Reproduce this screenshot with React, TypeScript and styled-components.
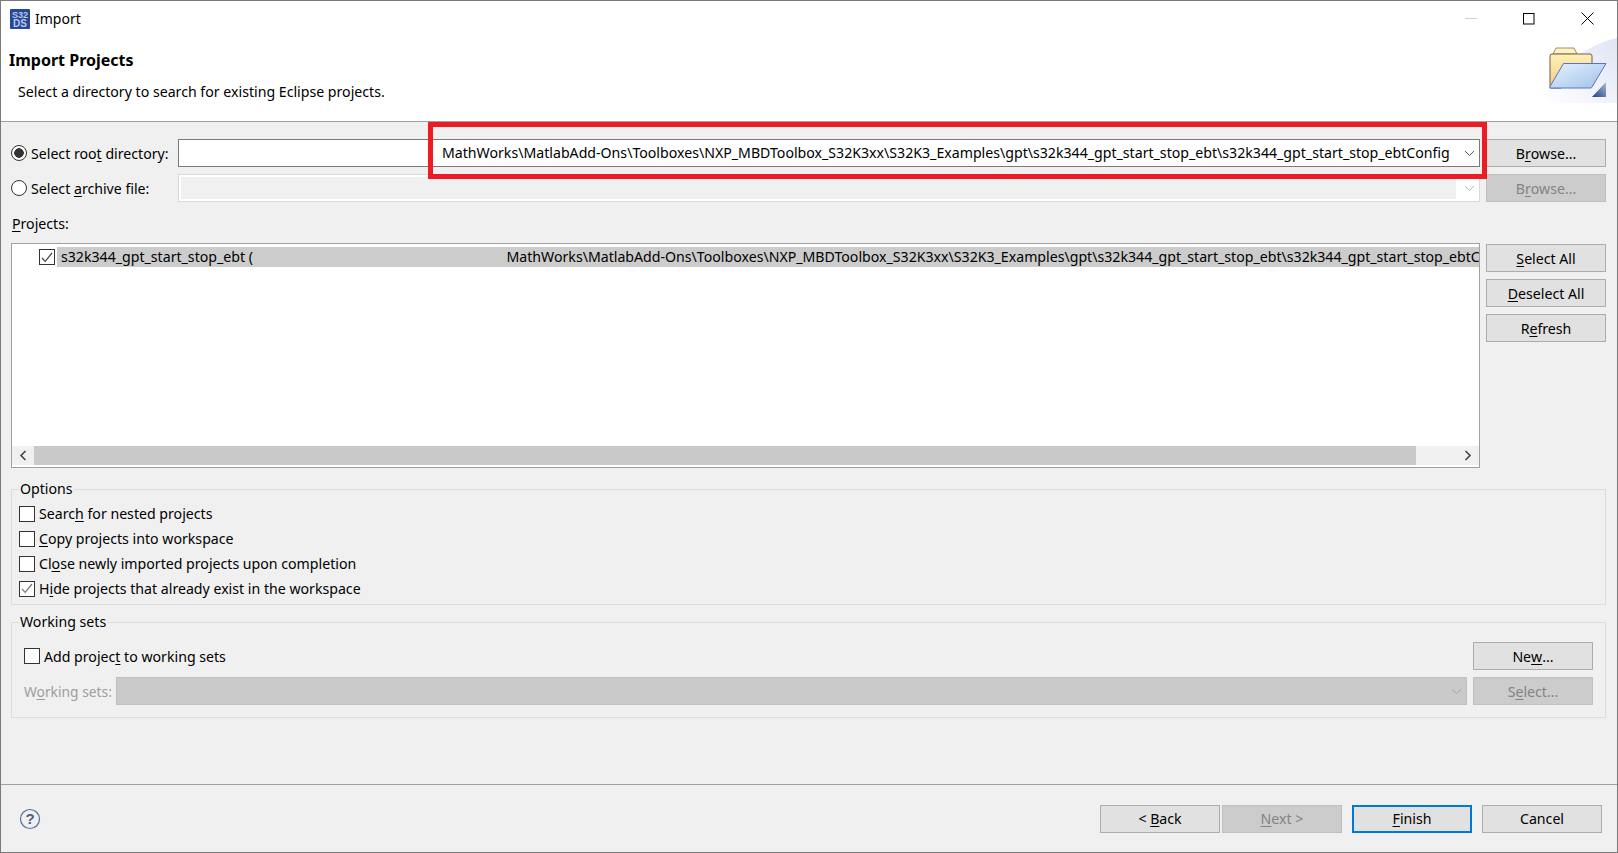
import React from "react";
import styled, { createGlobalStyle } from "styled-components";

const Global = createGlobalStyle`
  html, body { margin: 0; padding: 0; background: #f0f0f0; }
  body { font-family: "Noto Sans", "Open Sans", sans-serif; font-size: 14.15px; color: #000; }
  * { box-sizing: border-box; }
`;

const Window = styled.div`
  width: 1618px;
  height: 853px;
  border: 1px solid #7a7a7a;
  display: flex;
  flex-direction: column;
  background: #f0f0f0;
  overflow: hidden;
  position: relative;
`;
const TitleBar = styled.div`
  height: 37px;
  background: #fff;
  display: flex;
  align-items: center;
  padding: 0 23px 2px 9px;
  flex: none;
`;
const TitleText = styled.span`
  margin-left: 5px;
  font-size: 14px;
  flex: 1;
`;
const WinButtons = styled.div`
  display: flex;
  gap: 45px;
  align-items: center;
`;
const Header = styled.div`
  height: 84px;
  background: #fff;
  border-bottom: 1px solid #a0a0a0;
  flex: none;
  padding: 12px 0 0 8px;
  position: relative;
`;
const HeaderTitle = styled.div`
  font-weight: 700;
  font-size: 16px;
  line-height: 20px;
`;
const HeaderSub = styled.div`
  line-height: 20px;
  margin: 12px 0 0 9px;
`;
const Banner = styled.svg`
  position: absolute;
  right: 0;
  top: 0;
`;
const Body = styled.div`
  flex: 1;
  padding: 17px 11px 0 10px;
  display: flex;
  flex-direction: column;
  position: relative;
`;
const FormRow = styled.div<{ $mt?: number }>`
  display: flex;
  height: 28px;
  align-items: center;
  margin-top: ${(p) => p.$mt ?? 0}px;
`;
const Radio = styled.span<{ $on?: boolean }>`
  width: 16px;
  height: 16px;
  border-radius: 50%;
  border: 1px solid #333;
  background: ${(p) => (p.$on ? "radial-gradient(circle, #333 0 4.5px, #fff 5px)" : "#fff")};
  flex: none;
`;
const RadioLabel = styled.span`
  width: 147px;
  margin-left: 4px;
  white-space: nowrap;
`;
const Combo = styled.div<{ $disabled?: boolean }>`
  flex: 1;
  height: 28px;
  border: 1px solid ${(p) => (p.$disabled ? "#d9d9d9" : "#7a7a7a")};
  background: #fff;
  display: flex;
  align-items: center;
  justify-content: flex-end;
  padding: ${(p) => (p.$disabled ? "2px 0 2px 2px" : "0")};
  white-space: nowrap;
`;
const ComboDisabledFill = styled.div`
  flex: 1;
  height: 100%;
  background: #f0f0f0;
`;
const ComboValue = styled.span`
  flex: 1;
  text-align: left;
  margin-left: 263px;
  padding-bottom: 1px;
`;
const ChevronBox = styled.span`
  width: 23px;
  padding-left: 4px;
  display: flex;
  justify-content: center;
  flex: none;
`;
const Btn = styled.div<{ $disabled?: boolean; $default?: boolean }>`
  width: 120px;
  height: 28px;
  flex: none;
  display: flex;
  align-items: center;
  justify-content: center;
  white-space: pre;
  background: ${(p) => (p.$disabled ? "#cccccc" : "#e1e1e1")};
  color: ${(p) => (p.$disabled ? "#838383" : "#000")};
  border: ${(p) => (p.$default ? "2px solid #0078d7" : `1px solid ${p.$disabled ? "#bfbfbf" : "#adadad"}`)};
`;
const RowBtn = styled(Btn)`
  margin-left: 6px;
`;
const ProjectsLabel = styled.div`
  margin-top: 12px;
  line-height: 20px;
  padding-left: 1px;
`;
const TreeRow = styled.div`
  display: flex;
  margin-top: 9px;
  height: 225px;
  gap: 6px;
`;
const Tree = styled.div`
  flex: 1;
  min-width: 0;
  border: 1px solid #a0a0a0;
  background: #fff;
  display: flex;
  flex-direction: column;
  padding-top: 3px;
`;
const TreeItem = styled.div`
  display: flex;
  align-items: center;
  height: 20px;
  padding-left: 27px;
  flex: none;
`;
const Selected = styled.div`
  flex: 1;
  min-width: 0;
  height: 20px;
  background: #cccccc;
  margin-left: 2px;
  padding-left: 4px;
  line-height: 20px;
  white-space: nowrap;
  overflow: hidden;
  display: flex;
`;
const PathStart = styled.span`
  margin-left: 253.5px;
`;
const TreeSpacer = styled.div`
  flex: 1;
`;
const HScroll = styled.div`
  height: 19px;
  display: flex;
  align-items: center;
  background: #f0f0f0;
  margin-bottom: 2px;
`;
const ScrollArrow = styled.span`
  width: 22px;
  display: flex;
  justify-content: center;
  flex: none;
`;
const ScrollThumb = styled.div`
  width: 1382px;
  height: 100%;
  background: #c9c9c9;
  flex: none;
`;
const ScrollRest = styled.div`
  flex: 1;
`;
const SideButtons = styled.div`
  width: 120px;
  flex: none;
  display: flex;
  flex-direction: column;
  gap: 7px;
  padding-top: 1px;
`;
const Group = styled.fieldset<{ $mt: number; $h: number }>`
  margin: ${(p) => p.$mt}px 0 0 0;
  height: ${(p) => p.$h}px;
  border: 1px solid #dcdcdc;
  padding: 0;
  position: relative;
  display: block;
`;
const Legend = styled.legend`
  margin-left: 7px;
  padding: 0 1px;
  line-height: 18px;
`;
const CheckRow = styled.div<{ $ml?: number }>`
  display: flex;
  align-items: center;
  height: 25px;
  margin-left: ${(p) => p.$ml ?? 7}px;
`;
const Box = styled.span`
  width: 16px;
  height: 16px;
  border: 1px solid #333;
  background: #fff;
  flex: none;
  display: flex;
  align-items: center;
  justify-content: center;
`;
const CheckText = styled.span`
  margin-left: 4px;
  white-space: nowrap;
`;
const OptionList = styled.div`
  display: flex;
  flex-direction: column;
  padding-top: 3px;
`;
const WsTop = styled.div`
  display: flex;
  align-items: center;
  height: 28px;
  margin-top: 11px;
  padding-right: 12px;
`;
const WsBottom = styled.div`
  display: flex;
  align-items: center;
  height: 28px;
  margin-top: 7px;
  padding-right: 12px;
  padding-left: 12px;
`;
const WsLabel = styled.span`
  width: 92px;
  color: #9d9d9d;
  flex: none;
  white-space: nowrap;
  font-size: 13.8px;
`;
const WsCombo = styled.div`
  flex: 1;
  height: 28px;
  background: #cacaca;
  border: 1px solid #bfbfbf;
  display: flex;
  justify-content: flex-end;
  align-items: center;
`;
const Grow = styled.div`
  flex: 1;
`;
const WsBtn = styled(Btn)`
  margin-left: 6px;
`;
const Footer = styled.div`
  height: 68px;
  border-top: 1px solid #a0a0a0;
  flex: none;
  display: flex;
  align-items: center;
  padding: 0 15px 0 18px;
`;
const Back = styled(Btn)`
  margin-left: 2px;
`;
const Wide = styled(Btn)`
  margin-left: 10px;
`;
const RedBox = styled.div`
  position: absolute;
  left: 427px;
  top: 0px;
  width: 1059px;
  height: 57px;
  border: 5px solid #ed1c24;
  pointer-events: none;
`;

const U = styled.u`
  text-underline-offset: 2px;
`;

const Chevron = ({ c = "#555" }: { c?: string }) => (
  <svg width="11" height="7" viewBox="0 0 11 7"><path d="M1 1l4.5 4.5L10 1" fill="none" stroke={c} strokeWidth="1" /></svg>
);
const Tick = ({ c = "#444" }: { c?: string }) => (
  <svg width="12" height="11" viewBox="0 0 12 11"><path d="M1 6l3.2 3.4L11 1" fill="none" stroke={c} strokeWidth="1.2" /></svg>
);

const PATH = "MathWorks\\MatlabAdd-Ons\\Toolboxes\\NXP_MBDToolbox_S32K3xx\\S32K3_Examples\\gpt\\s32k344_gpt_start_stop_ebt\\s32k344_gpt_start_stop_ebtConfig";

function ScrollChevron({ dir }: { dir: "l" | "r" }) {
  return (
    <svg width="8" height="11" viewBox="0 0 8 11">
      <path d={dir === "l" ? "M6.5 1L2 5.5l4.5 4.5" : "M1.5 1L6 5.5 1.5 10"} fill="none" stroke="#444" strokeWidth="1.6" />
    </svg>
  );
}

export default function App() {
  return (
    <>
      <Global />
      <Window>
        <TitleBar>
          <svg width="20" height="20" viewBox="0 0 20 20">
            <rect width="20" height="20" rx="1" fill="#27479a" />
            <text x="10" y="8.5" fontSize="9" fontWeight="700" textAnchor="middle" fill="#b9c8e8" fontFamily="Liberation Sans, sans-serif">S32</text>
            <text x="10" y="18" fontSize="10" fontWeight="700" textAnchor="middle" fill="#b9c8e8" fontFamily="Liberation Sans, sans-serif">DS</text>
          </svg>
          <TitleText>Import</TitleText>
          <WinButtons>
            <svg width="13" height="13" viewBox="0 0 13 13"><path d="M0 6.5h12" stroke="#cfcfcf" /></svg>
            <svg width="13" height="13" viewBox="0 0 13 13"><rect x="0.5" y="1.5" width="10.5" height="10.5" fill="none" stroke="#000" /></svg>
            <svg width="13" height="13" viewBox="0 0 13 13"><path d="M.5.5l12 12M12.5.5l-12 12" stroke="#000" /></svg>
          </WinButtons>
        </TitleBar>
        <Header>
          <HeaderTitle>Import Projects</HeaderTitle>
          <HeaderSub>Select a directory to search for existing Eclipse projects.</HeaderSub>
          <Banner width="76" height="66" viewBox="0 0 76 66">
            <defs>
              <linearGradient id="sw" x1="0" y1="1" x2="1" y2="0">
                <stop offset="0" stopColor="#fff" />
                <stop offset="1" stopColor="#dfe5f5" />
              </linearGradient>
              <linearGradient id="fy" x1="0" y1="0" x2="0" y2="1">
                <stop offset="0" stopColor="#fff0b8" />
                <stop offset="1" stopColor="#eccf7c" />
              </linearGradient>
              <linearGradient id="fb" x1="0" y1="0" x2="1" y2="1">
                <stop offset="0" stopColor="#e6f3ff" />
                <stop offset="1" stopColor="#9fc0e8" />
              </linearGradient>
              <linearGradient id="tr" x1="0" y1="1" x2="1" y2="0">
                <stop offset="0" stopColor="#1f3f80" />
                <stop offset="1" stopColor="#a9bcdc" />
              </linearGradient>
            </defs>
            <path d="M1 65C12 35 40 8 76 0V65Z" fill="url(#sw)" />
            <path d="M12 16l3-6h18l3 6Z" fill="#fff3c4" stroke="#a08c6c" />
            <path d="M9 50V18a2 2 0 0 1 2-2H49a2 2 0 0 1 2 2V26L20 50Z" fill="url(#fy)" stroke="#7a5a48" strokeWidth="1" />
            <path d="M22.5 25.5H65L51 49a1.5 1.5 0 0 1-1.5 1H10a1 1 0 0 1-1-1.5Z" fill="url(#fb)" stroke="#6070c0" strokeWidth="1" />
            <path d="M65 44v15H51Z" fill="url(#tr)" />
          </Banner>
        </Header>
        <Body>
          <FormRow>
            <Radio $on />
            <RadioLabel>Select roo<U>t</U> directory:</RadioLabel>
            <Combo>
              <ComboValue>{PATH}</ComboValue>
              <ChevronBox><Chevron /></ChevronBox>
            </Combo>
            <RowBtn>B<U>r</U>owse...</RowBtn>
          </FormRow>
          <FormRow $mt={7}>
            <Radio />
            <RadioLabel>Select <U>a</U>rchive file:</RadioLabel>
            <Combo $disabled>
              <ComboDisabledFill />
              <ChevronBox><Chevron c="#b5b5b5" /></ChevronBox>
            </Combo>
            <RowBtn $disabled>B<U>r</U>owse...</RowBtn>
          </FormRow>
          <ProjectsLabel><U>P</U>rojects:</ProjectsLabel>
          <TreeRow>
            <Tree>
              <TreeItem>
                <Box><Tick /></Box>
                <Selected>
                  <span>s32k344_gpt_start_stop_ebt (</span>
                  <PathStart>{PATH}</PathStart>
                </Selected>
              </TreeItem>
              <TreeSpacer />
              <HScroll>
                <ScrollArrow><ScrollChevron dir="l" /></ScrollArrow>
                <ScrollThumb />
                <ScrollRest />
                <ScrollArrow><ScrollChevron dir="r" /></ScrollArrow>
              </HScroll>
            </Tree>
            <SideButtons>
              <Btn><U>S</U>elect All</Btn>
              <Btn><U>D</U>eselect All</Btn>
              <Btn>R<U>e</U>fresh</Btn>
            </SideButtons>
          </TreeRow>
          <Group $mt={12} $h={125}>
            <Legend>Options</Legend>
            <OptionList>
              <CheckRow><Box /><CheckText>Searc<U>h</U> for nested projects</CheckText></CheckRow>
              <CheckRow><Box /><CheckText><U>C</U>opy projects into workspace</CheckText></CheckRow>
              <CheckRow><Box /><CheckText>Cl<U>o</U>se newly imported projects upon completion</CheckText></CheckRow>
              <CheckRow><Box><Tick c="#777" /></Box><CheckText>H<U>i</U>de projects that already exist in the workspace</CheckText></CheckRow>
            </OptionList>
          </Group>
          <Group $mt={8} $h={105}>
            <Legend>Working sets</Legend>
            <WsTop>
              <CheckRow $ml={12}><Box /><CheckText>Add projec<U>t</U> to working sets</CheckText></CheckRow>
              <Grow />
              <WsBtn>Ne<U>w</U>...</WsBtn>
            </WsTop>
            <WsBottom>
              <WsLabel>W<U>o</U>rking sets:</WsLabel>
              <WsCombo><ChevronBox><Chevron c="#a5a5a5" /></ChevronBox></WsCombo>
              <WsBtn $disabled>S<U>e</U>lect...</WsBtn>
            </WsBottom>
          </Group>
          <RedBox />
        </Body>
        <Footer>
          <svg width="22" height="22" viewBox="0 0 22 22">
            <circle cx="11" cy="11" r="9.5" fill="none" stroke="#56719f" strokeWidth="1.2" />
            <text x="11" y="16" fontSize="15" fontWeight="700" textAnchor="middle" fill="#4a6088" fontFamily="Liberation Sans, sans-serif">?</text>
          </svg>
          <Grow />
          <Back>{"< "}<U>B</U>ack</Back>
          <Back $disabled><U>N</U>ext {">"}</Back>
          <Wide $default><U>F</U>inish</Wide>
          <Wide>Cancel</Wide>
        </Footer>
      </Window>
    </>
  );
}
